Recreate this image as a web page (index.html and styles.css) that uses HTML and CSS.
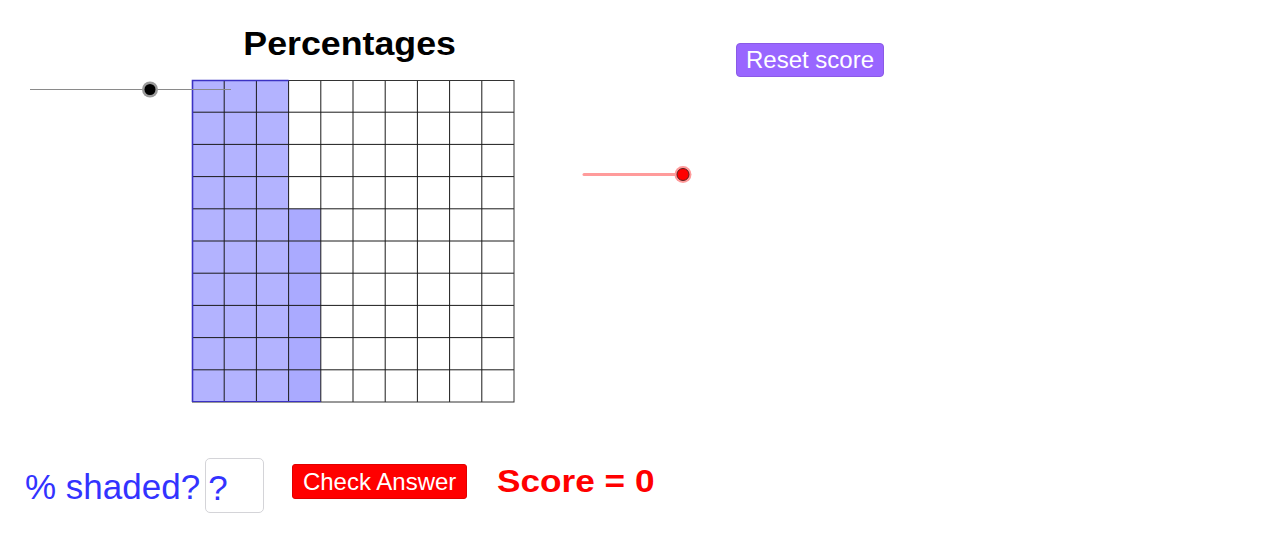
FILE: index.html
```html
<!DOCTYPE html>
<html lang="en">
<head>
<meta charset="utf-8">
<title>Percentages</title>
<link rel="stylesheet" href="styles.css">
</head>
<body>
<main class="applet">
  <section class="board">
    <div class="canvas">
      <h1 class="title"><span class="title-text">Percentages</span></h1>
      <svg class="graphics" width="736" height="358" viewBox="0 62 736 358" xmlns="http://www.w3.org/2000/svg">
        <!-- shading -->
        <rect x="192" y="80" width="96.6" height="322" fill="#b3b3ff"/>
        <rect x="288.6" y="208.8" width="32.2" height="193.2" fill="#aaaaff"/>
        <!-- grid lines -->
        <g stroke="#1a1a1a" stroke-width="1" fill="none">
          <path d="M192.5 112.2H514M192.5 144.4H514M192.5 176.6H514M192.5 208.8H514M192.5 241H514M192.5 273.2H514M192.5 305.4H514M192.5 337.6H514M192.5 369.8H514"/>
          <path d="M224.2 80V402M256.4 80V402M288.6 80V402M320.8 80V402M353 80V402M385.2 80V402M417.4 80V402M449.6 80V402M481.8 80V402"/>
        </g>
        <rect x="192.5" y="80.5" width="321.5" height="321.5" fill="none" stroke="#333" stroke-width="1"/>
        <path d="M192.5 402V80.5H288.6" fill="none" stroke="#3b32c4" stroke-width="1.6"/>
        <path d="M192.5 401.5H320.8" fill="none" stroke="#3b32c4" stroke-width="1"/>
        <!-- grey slider -->
        <line x1="30" y1="89.5" x2="231" y2="89.5" stroke="#8a8a8a" stroke-width="1"/>
        <circle cx="150" cy="89.5" r="8" fill="#9a9a9a"/>
        <circle cx="150" cy="89.5" r="5.5" fill="#000"/>
        <!-- red slider -->
        <line x1="584" y1="174.5" x2="683" y2="174.5" stroke="#ff9b9b" stroke-width="3" stroke-linecap="round"/>
        <circle cx="683" cy="174.5" r="8.5" fill="#ff9b9b"/>
        <circle cx="683" cy="174.5" r="6" fill="#ff0000" stroke="#5a1f1f" stroke-width="1"/>
      </svg>
    </div>
    <button class="reset" type="button">Reset score</button>
  </section>
  <section class="answer-row">
    <label class="prompt" for="answer">% shaded?</label>
    <input class="answer" id="answer" type="text" value="?">
    <button class="check" type="button">Check Answer</button>
    <span class="score">Score = 0</span>
  </section>
</main>
</body>
</html>
```

FILE: styles.css
```css
html, body {
  margin: 0;
  padding: 0;
  background: #ffffff;
}

body {
  font-family: "Liberation Sans", Arial, sans-serif;
  width: 1280px;
  height: 533px;
  overflow: hidden;
}

.applet {
  display: flex;
  flex-direction: column;
  width: 1280px;
  height: 533px;
}

.board {
  display: flex;
  align-items: flex-start;
}

.canvas {
  display: flex;
  flex-direction: column;
  width: 736px;
}

.title {
  margin: 26px 0 0 189px;
  width: 322px;
  height: 36px;
  line-height: 36px;
  font-size: 32.5px;
  font-weight: bold;
  text-align: center;
  color: #000;
}

.title-text {
  display: inline-block;
  transform: scaleX(1.1);
  transform-origin: center;
}

.graphics {
  display: block;
}

.reset {
  margin-top: 43px;
  width: 148px;
  height: 34px;
  padding: 0;
  background: #9966ff;
  border: 1px solid #8a5ae6;
  border-radius: 4px;
  color: #fff;
  font-family: "Liberation Sans", Arial, sans-serif;
  font-size: 24px;
  line-height: 30px;
}

.answer-row {
  display: flex;
  align-items: flex-start;
  margin-top: 38px;
  padding-left: 25px;
}

.prompt {
  margin-top: 9px;
  font-size: 35px;
  line-height: 40px;
  color: #3333ff;
}

.answer {
  box-sizing: border-box;
  margin-left: 5px;
  width: 59px;
  height: 55px;
  padding: 4px 0 0 2px;
  border: 1px solid #d4d4d8;
  border-radius: 5px;
  font-family: "Liberation Sans", Arial, sans-serif;
  font-size: 35px;
  color: #3333ff;
  background: #fff;
  outline: none;
}

.check {
  margin: 6px 0 0 28px;
  width: 175px;
  height: 35px;
  padding: 0;
  background: #ff0000;
  border: 1px solid #e00000;
  border-radius: 3px;
  color: #fff;
  font-family: "Liberation Sans", Arial, sans-serif;
  font-size: 24px;
  line-height: 32px;
}

.score {
  display: inline-block;
  margin: 3px 0 0 30px;
  font-size: 32px;
  line-height: 40px;
  font-weight: bold;
  color: #ff0000;
  transform: scaleX(1.1);
  transform-origin: left center;
}
```
